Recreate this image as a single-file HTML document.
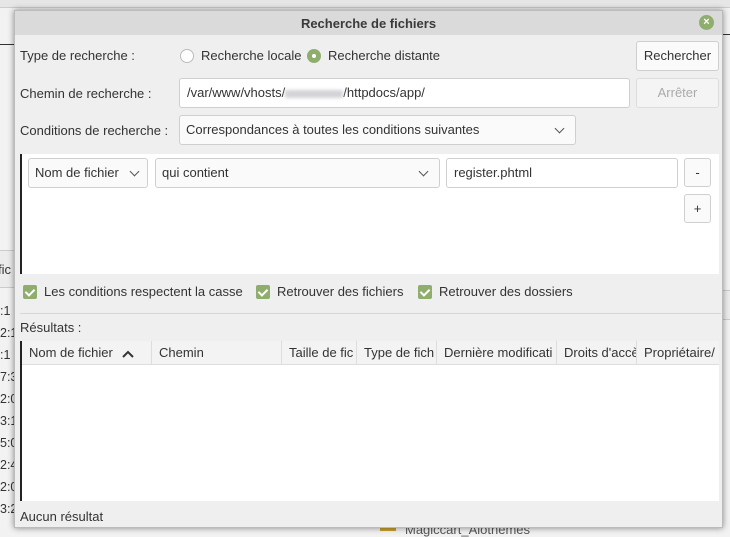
<!DOCTYPE html>
<html><head><meta charset="utf-8"><style>
*{box-sizing:border-box;margin:0;padding:0}
body{width:730px;height:531px;overflow:hidden;background:#f2f2f2;font-family:"Liberation Sans","DejaVu Sans",sans-serif;font-size:13px;color:#333;position:relative}
.a{position:absolute}
.bg{background:#fff}
.dlg{left:14px;top:10px;width:709px;height:518px;background:#efefef;box-shadow:0 0 6px rgba(0,0,0,.45);border:1px solid #bbb}
.title{left:0;top:0;width:100%;height:24px;background:#dadada;text-align:center;font-weight:bold;line-height:26px;font-size:13px;color:#3a3a3a}
.btn{background:#fafafa;border:1px solid #cfcfcf;border-radius:3px;text-align:center}
.ent{background:#fff;border:1px solid #cfcfcf;border-radius:3px;padding-left:7px}
.combo{background:#fafafa;border:1px solid #cfcfcf;border-radius:3px;padding-left:6px}
.chev{position:absolute;width:7px;height:7px;border-right:1.5px solid #555;border-bottom:1.5px solid #555;transform:rotate(45deg)}
.cb{width:14px;height:14px;background:#8fae6e;border-radius:2px}
.cb:after{content:"";position:absolute;left:4px;top:2px;width:4px;height:7px;border-right:2px solid #fff;border-bottom:2px solid #fff;transform:rotate(45deg)}
.hd{top:0;height:23px;line-height:23px;border-right:1px solid #ddd;padding-left:7px;white-space:nowrap;overflow:hidden}
.t{white-space:nowrap}
</style></head><body>
<div class="a" style="left:0;top:0;width:730px;height:8px;background:#e6e6e6;border-bottom:1px solid #ccc"></div>
<div class="a" style="left:0;top:44px;width:20px;height:1px;background:#333"></div>
<div class="a" style="left:0;top:250px;width:20px;height:38px;background:#ececec;border-top:1px solid #ccc;border-bottom:1px solid #ccc"></div>
<div class="a t" style="left:-2px;top:262px">fic</div>
<div class="a" style="left:0;top:300px;font-size:12.5px;line-height:22px;color:#333">:1<br>2:1<br>:1<br>7:3<br>2:0<br>3:1<br>5:0<br>2:4<br>2:0<br>3:2</div>
<div class="a" style="left:723px;top:290px;width:7px;height:30px;background:#ececec;border-top:1px solid #ccc;border-bottom:1px solid #ccc"></div>
<div class="a" style="left:723px;top:34px;width:7px;height:1px;background:#333"></div>
<div class="a" style="left:380px;top:524px;width:16px;height:7px;background:#c8a030"></div>
<div class="a t" style="left:405px;top:522px;color:#555">Magiccart_Alothemes</div>

<div class="a dlg">
 <div class="a title">Recherche de fichiers</div>
 <div class="a" style="left:684px;top:4px;width:15px;height:15px;border-radius:50%;background:#8fae6e;color:#fff;font-size:11px;font-weight:bold;text-align:center;line-height:15px">×</div>

 <div class="a t" style="left:5px;top:37px">Type de recherche :</div>
 <div class="a" style="left:165px;top:38px;width:14px;height:14px;border-radius:50%;border:1px solid #bbb;background:#fff"></div>
 <div class="a t" style="left:186px;top:37px">Recherche locale</div>
 <div class="a" style="left:292px;top:38px;width:14px;height:14px;border-radius:50%;background:#8fae6e"></div>
 <div class="a" style="left:297px;top:43px;width:4px;height:4px;border-radius:50%;background:#fff"></div>
 <div class="a t" style="left:313px;top:37px">Recherche distante</div>
 <div class="a btn" style="left:621px;top:30px;width:83px;height:30px;line-height:28px">Rechercher</div>

 <div class="a t" style="left:5px;top:75px">Chemin de recherche :</div>
 <div class="a ent" style="left:164px;top:67px;width:451px;height:30px;line-height:28px">/var/www/vhosts/<span style="display:inline-block;width:58px;height:8px;background:#d4d4d8;filter:blur(1.5px);vertical-align:middle"></span>/httpdocs/app/</div>
 <div class="a btn" style="left:621px;top:67px;width:83px;height:30px;line-height:28px;color:#aaa;background:#f4f4f4;border-color:#ddd">Arrêter</div>

 <div class="a t" style="left:5px;top:112px">Conditions de recherche :</div>
 <div class="a combo" style="left:164px;top:104px;width:397px;height:30px;line-height:28px">Correspondances à toutes les conditions suivantes<span class="chev" style="left:376px;top:9px"></span></div>

 <div class="a bg" style="left:5px;top:143px;width:699px;height:120px"></div>
 <div class="a" style="left:5px;top:143px;width:2px;height:120px;background:#222"></div>
 <div class="a combo" style="left:13px;top:147px;width:120px;height:30px;line-height:28px">Nom de fichier<span class="chev" style="left:102px;top:9px"></span></div>
 <div class="a combo" style="left:140px;top:147px;width:285px;height:30px;line-height:28px">qui contient<span class="chev" style="left:264px;top:9px"></span></div>
 <div class="a ent" style="left:431px;top:147px;width:232px;height:30px;line-height:28px">register.phtml</div>
 <div class="a btn" style="left:669px;top:147px;width:27px;height:29px;line-height:27px">-</div>
 <div class="a btn" style="left:669px;top:183px;width:27px;height:29px;line-height:27px">+</div>

 <div class="a cb" style="left:8px;top:274px"></div>
 <div class="a t" style="left:29px;top:273px">Les conditions respectent la casse</div>
 <div class="a cb" style="left:241px;top:274px"></div>
 <div class="a t" style="left:262px;top:273px">Retrouver des fichiers</div>
 <div class="a cb" style="left:403px;top:274px"></div>
 <div class="a t" style="left:424px;top:273px">Retrouver des dossiers</div>
 <div class="a" style="left:5px;top:302px;width:701px;height:1px;background:#d6d6d6"></div>

 <div class="a t" style="left:5px;top:309px">Résultats :</div>
 <div class="a bg" style="left:5px;top:330px;width:699px;height:160px"></div>
 <div class="a" style="left:5px;top:330px;width:2px;height:160px;background:#222"></div>
 <div class="a" style="left:7px;top:330px;width:697px;height:24px;background:#f3f3f3;border-bottom:1px solid #ddd;overflow:hidden">
  <div class="a hd" style="left:0;width:130px">Nom de fichier <svg width="12" height="8" style="margin-left:6px;vertical-align:middle"><path d="M1 7 L6 2 L11 7" stroke="#333" stroke-width="2" fill="none"/></svg></div>
  <div class="a hd" style="left:130px;width:130px">Chemin</div>
  <div class="a hd" style="left:260px;width:75px">Taille de fic</div>
  <div class="a hd" style="left:335px;width:80px">Type de fich</div>
  <div class="a hd" style="left:415px;width:120px">Dernière modificati</div>
  <div class="a hd" style="left:535px;width:80px">Droits d'accè</div>
  <div class="a hd" style="left:615px;width:82px;border-right:none">Propriétaire/</div>
 </div>
 <div class="a t" style="left:5px;top:498px">Aucun résultat</div>
</div>
</body></html>
